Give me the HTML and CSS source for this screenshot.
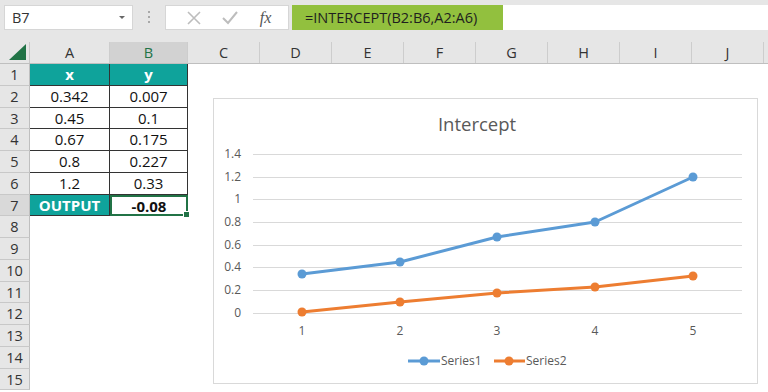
FILE: index.html
```html
<html>
    <head>
        <meta charset="utf-8">
        <link rel="stylesheet" href="styles.css">
    </head>
    <body>
        <div class="toolbar">
            <div class="nameBox">
                <span>B7</span>
                <span class="dropArrow"></span>
            </div>
            <div class="dots"><i></i><i></i><i></i></div>
            <div class="formulaTools">
                <svg width="14" height="14" viewBox="0 0 14 14"><path d="M1 1 L13 13 M13 1 L1 13" stroke="#bdbdbd" stroke-width="1.6" fill="none"/></svg>
                <svg width="16" height="14" viewBox="0 0 16 14"><path d="M1 7 L6 12 L15 1" stroke="#bdbdbd" stroke-width="2" fill="none"/></svg>
                <span class="fx">fx</span>
            </div>
            <div class="formula">=INTERCEPT(B2:B6,A2:A6)</div>
            <div class="formulaRest"></div>
        </div>

        <div class="sheet">
            <div class="row headRow">
                <div class="corner"><span></span></div>
                <div class="colHead colA">A</div>
                <div class="colHead colB active">B</div>
                <div class="colHead">C</div>
                <div class="colHead">D</div>
                <div class="colHead">E</div>
                <div class="colHead">F</div>
                <div class="colHead">G</div>
                <div class="colHead">H</div>
                <div class="colHead">I</div>
                <div class="colHead">J</div>
            </div>
            <div class="row">
                <div class="rowHead">1</div>
                <div class="cell colA title">x</div>
                <div class="cell colB title">y</div>
            </div>
            <div class="row">
                <div class="rowHead">2</div>
                <div class="cell colA">0.342</div>
                <div class="cell colB">0.007</div>
            </div>
            <div class="row">
                <div class="rowHead">3</div>
                <div class="cell colA">0.45</div>
                <div class="cell colB">0.1</div>
            </div>
            <div class="row">
                <div class="rowHead">4</div>
                <div class="cell colA">0.67</div>
                <div class="cell colB">0.175</div>
            </div>
            <div class="row">
                <div class="rowHead">5</div>
                <div class="cell colA">0.8</div>
                <div class="cell colB">0.227</div>
            </div>
            <div class="row">
                <div class="rowHead">6</div>
                <div class="cell colA">1.2</div>
                <div class="cell colB">0.33</div>
            </div>
            <div class="row">
                <div class="rowHead active">7</div>
                <div class="cell colA title">OUTPUT</div>
                <div class="cell colB result">-0.08<span class="handle"></span></div>
            </div>
            <div class="row"><div class="rowHead">8</div></div>
            <div class="row"><div class="rowHead">9</div></div>
            <div class="row"><div class="rowHead">10</div></div>
            <div class="row"><div class="rowHead">11</div></div>
            <div class="row"><div class="rowHead">12</div></div>
            <div class="row"><div class="rowHead">13</div></div>
            <div class="row"><div class="rowHead">14</div></div>
            <div class="row"><div class="rowHead">15</div></div>

            <!-- chart floats over the cells -->
            <div class="chart">
                <svg width="545" height="286" viewBox="0 0 545 286">
                    <text x="264" y="33" class="chartTitle" text-anchor="middle">Intercept</text>
                    <g stroke="#d9d9d9" stroke-width="1">
                        <line x1="40" x2="529" y1="56.5" y2="56.5"/>
                        <line x1="40" x2="529" y1="79.5" y2="79.5"/>
                        <line x1="40" x2="529" y1="101.5" y2="101.5"/>
                        <line x1="40" x2="529" y1="124.5" y2="124.5"/>
                        <line x1="40" x2="529" y1="147.5" y2="147.5"/>
                        <line x1="40" x2="529" y1="169.5" y2="169.5"/>
                        <line x1="40" x2="529" y1="192.5" y2="192.5"/>
                        <line x1="40" x2="529" y1="215.5" y2="215.5"/>
                    </g>
                    <g class="axisText" text-anchor="end">
                        <text x="28" y="60">1.4</text>
                        <text x="28" y="83">1.2</text>
                        <text x="28" y="105">1</text>
                        <text x="28" y="128">0.8</text>
                        <text x="28" y="151">0.6</text>
                        <text x="28" y="173">0.4</text>
                        <text x="28" y="196">0.2</text>
                        <text x="28" y="219">0</text>
                    </g>
                    <g class="axisText" text-anchor="middle">
                        <text x="89" y="237">1</text>
                        <text x="187" y="237">2</text>
                        <text x="284" y="237">3</text>
                        <text x="382" y="237">4</text>
                        <text x="480" y="237">5</text>
                    </g>
                    <g fill="#5b9bd5">
                        <polyline points="89,176 187,164 284,139 382,124 480,79" stroke="#5b9bd5" stroke-width="3" fill="none" stroke-linejoin="round"/>
                        <circle cx="89" cy="176" r="4.5"/>
                        <circle cx="187" cy="164" r="4.5"/>
                        <circle cx="284" cy="139" r="4.5"/>
                        <circle cx="382" cy="124" r="4.5"/>
                        <circle cx="480" cy="79" r="4.5"/>
                    </g>
                    <g fill="#ed7d31">
                        <polyline points="89,214 187,204 284,195 382,189 480,178" stroke="#ed7d31" stroke-width="3" fill="none" stroke-linejoin="round"/>
                        <circle cx="89" cy="214" r="4.5"/>
                        <circle cx="187" cy="204" r="4.5"/>
                        <circle cx="284" cy="195" r="4.5"/>
                        <circle cx="382" cy="189" r="4.5"/>
                        <circle cx="480" cy="178" r="4.5"/>
                    </g>
                    <line x1="195" x2="227" y1="263" y2="263" stroke="#5b9bd5" stroke-width="3"/>
                    <circle cx="211" cy="263" r="4.5" fill="#5b9bd5"/>
                    <text x="228" y="267" class="axisText">Series1</text>
                    <line x1="281" x2="312" y1="263" y2="263" stroke="#ed7d31" stroke-width="3"/>
                    <circle cx="296" cy="263" r="4.5" fill="#ed7d31"/>
                    <text x="313" y="267" class="axisText">Series2</text>
                </svg>
            </div>
        </div>
    </body>
</html>
```

FILE: styles.css
```css
body {
    margin: 0;
    width: 768px;
    height: 392px;
    overflow: hidden;
    background: #ffffff;
    font-family: "Open Sans", "Liberation Sans", sans-serif;
    color: #222;
}

/* formula bar */
.toolbar {
    display: flex;
    align-items: flex-start;
    height: 42px;
    padding: 5px 0 0 4px;
    background: #e6e6e6;
    box-sizing: border-box;
}
.nameBox {
    display: flex;
    align-items: center;
    justify-content: space-between;
    width: 129px;
    height: 25px;
    padding: 0 7px 0 7px;
    box-sizing: border-box;
    background: #fff;
    border: 1px solid #d6d6d6;
    font-size: 14.5px;
    color: #333;
}
.dropArrow {
    width: 0;
    height: 0;
    border-left: 3px solid transparent;
    border-right: 3px solid transparent;
    border-top: 3px solid #666;
}
.dots {
    display: flex;
    flex-direction: column;
    gap: 3px;
    margin: 6px 15px 0 15px;
}
.dots i {
    display: block;
    width: 2px;
    height: 2px;
    background: #a8a8a8;
}
.formulaTools {
    display: flex;
    align-items: center;
    justify-content: space-around;
    width: 124px;
    height: 25px;
    padding: 0 6px 0 10px;
    box-sizing: border-box;
    background: #fff;
    border: 1px solid #d6d6d6;
}
.fx {
    font-family: "Liberation Serif", serif;
    font-style: italic;
    font-size: 16px;
    color: #555;
}
.formula {
    width: 211px;
    height: 25px;
    margin-left: 3px;
    padding-left: 13px;
    box-sizing: border-box;
    background: #92c03e;
    font-size: 14.5px;
    line-height: 25px;
    color: #1f1f1f;
}
.formulaRest {
    flex: 1;
    height: 25px;
    background: #fff;
}

/* sheet */
.sheet {
    position: relative;
}
.row {
    display: flex;
    height: 21.75px;
}
.headRow {
    height: 21px;
    background: #e6e6e6;
    border-bottom: 1px solid #bfbfbf;
}
.corner {
    width: 30px;
    border-right: 1px solid #c8c8c8;
    box-sizing: border-box;
    position: relative;
}
.corner span {
    position: absolute;
    right: 3px;
    bottom: 3px;
    width: 0;
    height: 0;
    border-left: 17px solid transparent;
    border-bottom: 16px solid #217346;
}
.colHead {
    width: 72px;
    border-right: 1px solid #cdcdcd;
    box-sizing: border-box;
    text-align: center;
    font-size: 14.5px;
    line-height: 21px;
    color: #333;
}
.colA {
    width: 80px;
}
.colB {
    width: 78px;
}
.colHead.active {
    background: #d2d2d2;
    color: #217346;
}
.rowHead {
    width: 30px;
    background: #e6e6e6;
    border-right: 1px solid #bfbfbf;
    border-bottom: 1px solid #c8c8c8;
    box-sizing: border-box;
    text-align: center;
    font-size: 14.5px;
    line-height: 21px;
    color: #333;
}
.rowHead.active {
    background: #d9d9d9;
}
.cell {
    position: relative;
    border-right: 1px solid #333;
    border-bottom: 1px solid #333;
    box-sizing: border-box;
    text-align: center;
    font-size: 15px;
    line-height: 21px;
    color: #111;
}
.cell.title {
    background: #0fa39b;
    color: #fff;
    font-weight: 700;
}
.cell.result {
    font-weight: 700;
    border: 2px solid #217346;
    line-height: 18px;
}
.handle {
    position: absolute;
    right: -4px;
    bottom: -4px;
    width: 5px;
    height: 5px;
    background: #217346;
    border: 1px solid #fff;
}

/* chart */
.chart {
    position: absolute;
    left: 213px;
    top: 56px;
    width: 545px;
    height: 286px;
    background: #fff;
    border: 1px solid #d9d9d9;
    box-sizing: border-box;
}
.chart svg {
    display: block;
    position: absolute;
    left: -1px;
    top: -1px;
}
.chartTitle {
    font-family: "Open Sans", sans-serif;
    font-size: 18.5px;
    fill: #595959;
}
.axisText {
    font-family: "Open Sans", sans-serif;
    font-size: 12px;
    fill: #595959;
}
```
